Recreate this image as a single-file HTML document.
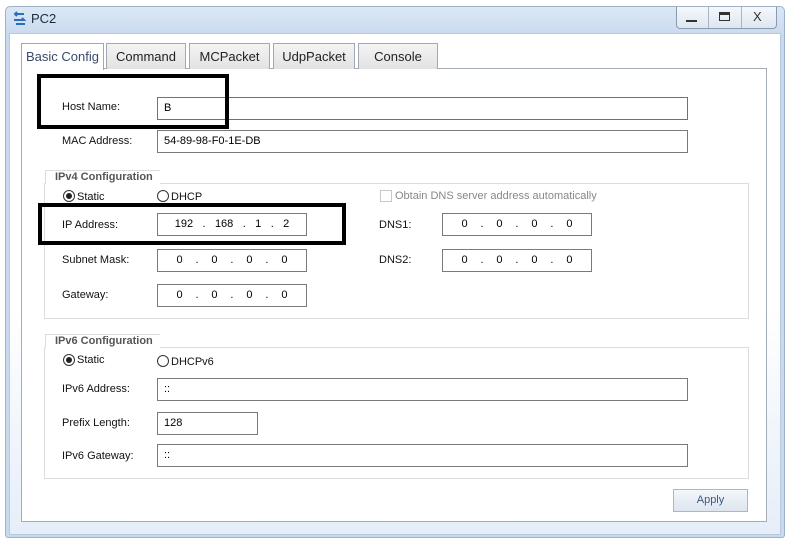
<!DOCTYPE html>
<html><head><style>
*{box-sizing:border-box;margin:0;padding:0}
body{width:789px;height:542px;background:#fff;font-family:"Liberation Sans",sans-serif;font-size:11px;color:#000;position:relative;overflow:hidden}
.a{position:absolute}
.win{left:5px;top:6px;width:780px;height:532px;border:1px solid #9fb3c8;border-radius:5px 5px 3px 3px;background:linear-gradient(#dbe7f5,#c9daee 30px,#c9daee);}
.body{left:9px;top:33px;width:772px;height:502px;background:linear-gradient(#fff,#fff 55%,#e6eef9);border:1px solid #b9c9dc}
.panel{left:21px;top:68px;width:746px;height:454px;border:1px solid #a4acb6;background:#fff}
.tab{top:43px;height:26px;border:1px solid #a0a8b4;border-bottom:none;background:linear-gradient(#f4f4f4,#e2e2e2);font-size:13px;color:#222;text-align:center;line-height:25px}
.inp{height:23px;border:1px solid #7a7a7a;background:#fff;font-size:11px;padding-left:6px;line-height:21px}
.lbl{font-size:11px;color:#111}
.blk{border:4px solid #000}
.grp{border:1px solid #dcdcdc}
.gh{font-size:11px;font-weight:bold;color:#555;background:#fff}
.rad{width:12px;height:12px;border:1px solid #333;border-radius:50%;background:#fff}
.rad.on::after{content:"";position:absolute;left:2px;top:2px;width:6px;height:6px;border-radius:50%;background:#222}
.ip{display:flex;justify-content:space-around;padding:0 12px;letter-spacing:0}
.btn{border:1px solid #8a9ab0;border-radius:2px}
</style></head><body>
<div class="a win"></div>
<div class="a" style="left:13px;top:11px;width:14px;height:15px">
<svg width="14" height="15"><path d="M2 3h9M4 1l-2 2 2 2M1 9h10l-2-2M3 13h9" stroke="#2c6fb7" stroke-width="2" fill="none"/></svg></div>
<div class="a" style="left:31px;top:11px;font-size:13px;color:#1a2a40">PC2</div>
<div class="a btn" style="left:676px;top:7px;width:101px;height:22px;background:linear-gradient(#f5f8fc,#dde6f0);border-top:none;border-radius:0 0 4px 4px"></div>
<div class="a" style="left:708px;top:7px;width:1px;height:21px;background:#a8b4c4"></div>
<div class="a" style="left:741px;top:7px;width:1px;height:21px;background:#a8b4c4"></div>
<div class="a" style="left:686px;top:20px;width:11px;height:2px;background:#333"></div>
<div class="a" style="left:719px;top:12px;width:11px;height:9px;border:1px solid #333;border-top-width:3px"></div>
<div class="a" style="left:753px;top:9px;font-size:13px;color:#333">X</div>
<div class="a body"></div>
<div class="a panel"></div>
<div class="a tab" style="left:21px;width:83px;background:#fff;color:#3a4a6a;height:27px">Basic Config</div>
<div class="a tab" style="left:106px;width:80px">Command</div>
<div class="a tab" style="left:189px;width:81px">MCPacket</div>
<div class="a tab" style="left:273px;width:82px">UdpPacket</div>
<div class="a tab" style="left:358px;width:80px">Console</div>

<div class="a lbl" style="left:62px;top:101px">Host Name:</div>
<div class="a inp" style="left:157px;top:97px;width:531px;border-color:#3a7bd5">B</div>
<div class="a blk" style="left:37px;top:74px;width:192px;height:55px"></div>
<div class="a lbl" style="left:62px;top:135px">MAC Address:</div>
<div class="a inp" style="left:157px;top:130px;width:531px">54-89-98-F0-1E-DB</div>

<div class="a grp" style="left:44px;top:183px;width:705px;height:136px"></div>
<div class="a gh" style="left:45px;top:170px;width:115px;height:14px;padding-left:9px;border-top:1px solid #dcdcdc;border-left:1px solid #dcdcdc">IPv4 Configuration</div>
<div class="a rad on" style="left:63px;top:190px"></div><div class="a lbl" style="left:77px;top:191px">Static</div>
<div class="a rad" style="left:157px;top:190px"></div><div class="a lbl" style="left:171px;top:191px">DHCP</div>
<div class="a" style="left:380px;top:190px;width:12px;height:12px;border:1px solid #c8c8c8"></div>
<div class="a lbl" style="left:395px;top:190px;color:#888">Obtain DNS server address automatically</div>
<div class="a lbl" style="left:62px;top:219px">IP Address:</div>
<div class="a inp ip" style="left:157px;top:213px;width:150px"><span>192</span><span>.</span><span>168</span><span>.</span><span>1</span><span>.</span><span>2</span></div>
<div class="a blk" style="left:38px;top:203px;width:308px;height:42px"></div>
<div class="a lbl" style="left:62px;top:254px">Subnet Mask:</div>
<div class="a inp ip" style="left:157px;top:249px;width:150px"><span>0</span><span>.</span><span>0</span><span>.</span><span>0</span><span>.</span><span>0</span></div>
<div class="a lbl" style="left:62px;top:289px">Gateway:</div>
<div class="a inp ip" style="left:157px;top:284px;width:150px"><span>0</span><span>.</span><span>0</span><span>.</span><span>0</span><span>.</span><span>0</span></div>
<div class="a lbl" style="left:379px;top:219px">DNS1:</div>
<div class="a inp ip" style="left:442px;top:213px;width:150px"><span>0</span><span>.</span><span>0</span><span>.</span><span>0</span><span>.</span><span>0</span></div>
<div class="a lbl" style="left:379px;top:254px">DNS2:</div>
<div class="a inp ip" style="left:442px;top:249px;width:150px"><span>0</span><span>.</span><span>0</span><span>.</span><span>0</span><span>.</span><span>0</span></div>

<div class="a grp" style="left:44px;top:347px;width:705px;height:132px"></div>
<div class="a gh" style="left:45px;top:334px;width:115px;height:14px;padding-left:9px;border-top:1px solid #dcdcdc;border-left:1px solid #dcdcdc">IPv6 Configuration</div>
<div class="a rad on" style="left:63px;top:354px"></div><div class="a lbl" style="left:77px;top:354px">Static</div>
<div class="a rad" style="left:157px;top:355px"></div><div class="a lbl" style="left:171px;top:356px">DHCPv6</div>
<div class="a lbl" style="left:62px;top:383px">IPv6 Address:</div>
<div class="a inp" style="left:157px;top:378px;width:531px">::</div>
<div class="a lbl" style="left:62px;top:417px">Prefix Length:</div>
<div class="a inp" style="left:157px;top:412px;width:101px">128</div>
<div class="a lbl" style="left:62px;top:450px">IPv6 Gateway:</div>
<div class="a inp" style="left:157px;top:444px;width:531px">::</div>
<div class="a" style="left:673px;top:489px;width:75px;height:23px;border:1px solid #a8b8cc;background:linear-gradient(#f4f7fb,#dde5ef);text-align:center;line-height:21px;color:#3a5a80">Apply</div>
</body></html>
